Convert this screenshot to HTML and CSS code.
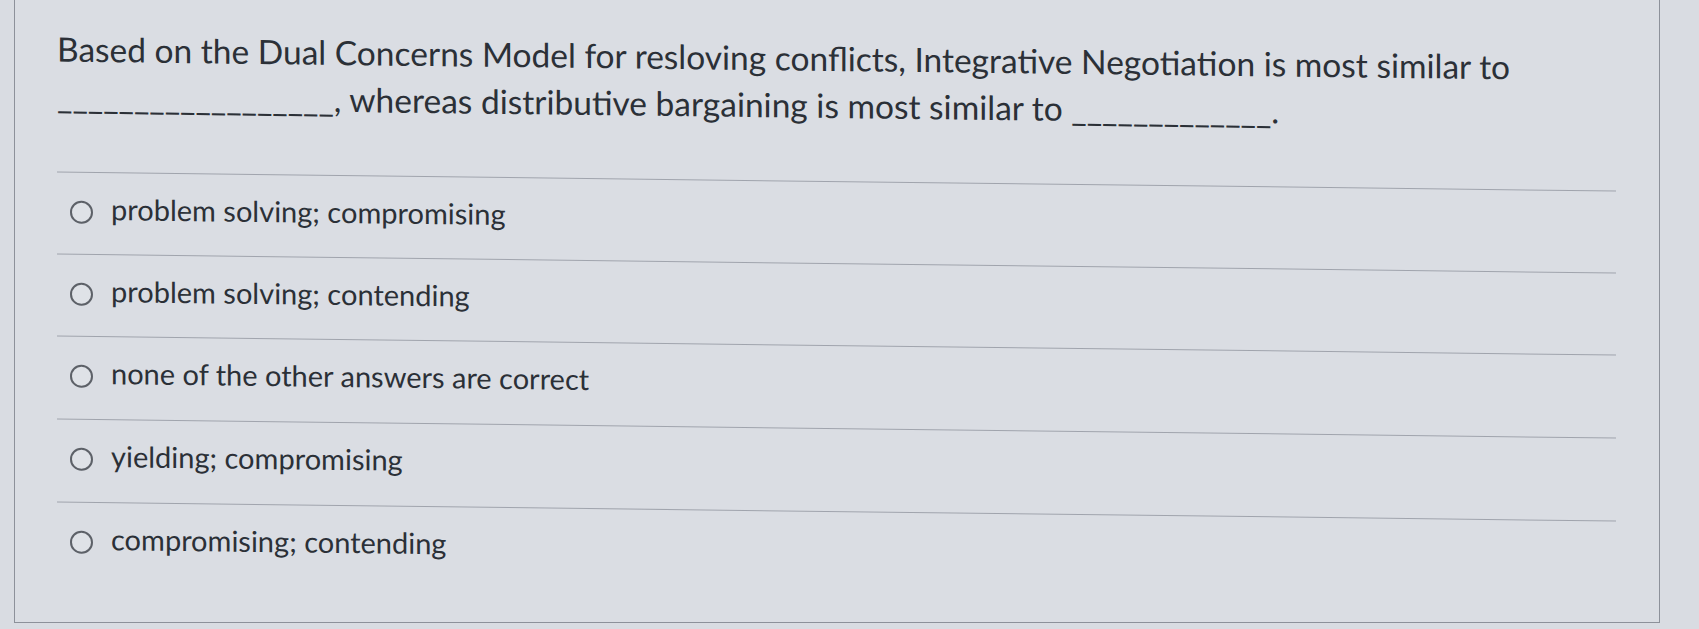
FILE: index.html
```html
<!DOCTYPE html>
<html lang="en">
<head>
<meta charset="utf-8">
<title>Question</title>
<link rel="stylesheet" href="styles.css">
</head>
<body>
<div class="panel">
  <div class="content">
    <div class="question">Based on the Dual Concerns Model for resloving conflicts, Integrative Negotiation is most similar to __________________, whereas distributive bargaining is most similar to _____________.</div>
    <div class="answers">
      <label class="answer"><span class="radio"></span><span class="answer-text">problem solving; compromising</span></label>
      <label class="answer"><span class="radio"></span><span class="answer-text">problem solving; contending</span></label>
      <label class="answer"><span class="radio"></span><span class="answer-text">none of the other answers are correct</span></label>
      <label class="answer"><span class="radio"></span><span class="answer-text">yielding; compromising</span></label>
      <label class="answer"><span class="radio"></span><span class="answer-text">compromising; contending</span></label>
    </div>
  </div>
</div>
</body>
</html>
```

FILE: styles.css
```css
html, body {
  margin: 0;
  padding: 0;
  background: #d9dce2;
}

body {
  font-family: Lato, "Open Sans", sans-serif;
  color: #2b3037;
  overflow: hidden;
}

.panel {
  box-sizing: border-box;
  margin-left: 14px;
  width: 1646px;
  height: 623px;
  border-left: 1.5px solid #8d919a;
  border-right: 1.5px solid #8d919a;
  border-bottom: 1.5px solid #8d919a;
  background: #dadde3;
}

.content {
  padding: 25px 43px 0 42px;
  transform: skewY(0.7deg);
  transform-origin: 0 0;
}

.question {
  font-size: 33.5px;
  line-height: 47px;
  margin-bottom: 52px;
}

.answers {
  display: flex;
  flex-direction: column;
}

.answer {
  box-sizing: border-box;
  height: 82px;
  display: flex;
  align-items: center;
  border-top: 1.5px solid #a0a4ad;
  padding-left: 13px;
  padding-bottom: 3px;
  font-size: 29px;
}

.answer:nth-child(n+3) {
  height: 83px;
}

.radio {
  box-sizing: border-box;
  width: 23px;
  height: 23px;
  border: 2px solid #5d6168;
  border-radius: 50%;
  background: #dfe2e7;
  flex: none;
  margin-right: 18px;
}

.answer-text {
  margin-bottom: 8px;
}
```
